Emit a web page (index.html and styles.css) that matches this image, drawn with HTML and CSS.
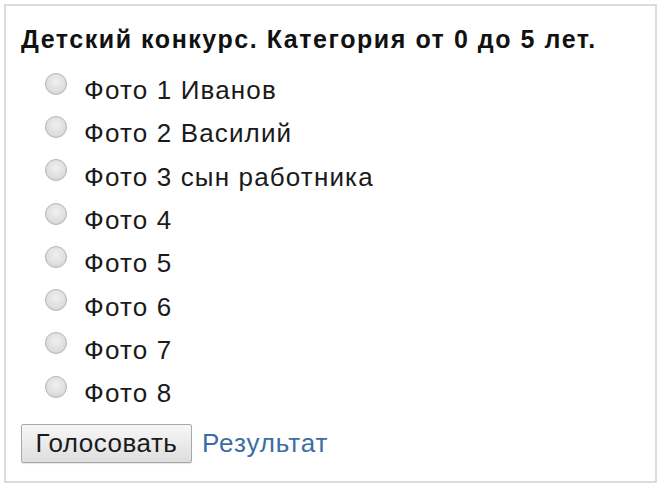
FILE: index.html
```html
<!DOCTYPE html>
<html lang="ru">
<head>
<meta charset="utf-8">
<link rel="stylesheet" href="styles.css">
</head>
<body>
<div class="poll">
  <h2 class="title">Детский конкурс. Категория от 0 до 5 лет.</h2>
  <ul class="options">
    <li class="option"><span class="radio"></span><span class="label">Фото 1 Иванов</span></li>
    <li class="option"><span class="radio"></span><span class="label">Фото 2 Василий</span></li>
    <li class="option"><span class="radio"></span><span class="label">Фото 3 сын работника</span></li>
    <li class="option"><span class="radio"></span><span class="label">Фото 4</span></li>
    <li class="option"><span class="radio"></span><span class="label">Фото 5</span></li>
    <li class="option"><span class="radio"></span><span class="label">Фото 6</span></li>
    <li class="option"><span class="radio"></span><span class="label">Фото 7</span></li>
    <li class="option"><span class="radio"></span><span class="label">Фото 8</span></li>
  </ul>
  <div class="actions">
    <button class="vote">Голосовать</button>
    <a class="result" href="#">Результат</a>
  </div>
</div>
</body>
</html>
```

FILE: styles.css
```css
html, body {
  margin: 0;
  padding: 0;
  background: #fff;
}
body {
  padding: 4px;
  font-family: "Liberation Sans", Arial, sans-serif;
  color: #1a1a1a;
}
.poll {
  width: 653px;
  height: 479px;
  border: 2px solid #dcdcdc;
  box-sizing: border-box;
  padding: 18px 0 0 15px;
}
.title {
  margin: 0;
  font-size: 25px;
  font-weight: bold;
  line-height: 30px;
  letter-spacing: 1.55px;
  color: #111;
}
.options {
  list-style: none;
  margin: 15px 0 0 0;
  padding: 0 0 0 24px;
}
.option {
  display: flex;
  align-items: center;
  height: 43.3px;
}
.radio {
  width: 22px;
  height: 22px;
  border-radius: 50%;
  box-sizing: border-box;
  border: 1px solid #b4b4b4;
  background: radial-gradient(circle at 50% 40%, #f0f0f0 0%, #e0e0e0 55%, #cccccc 100%);
  margin-right: 17px;
  flex: none;
  position: relative;
  top: -7px;
}
.label {
  font-size: 26px;
  letter-spacing: 1.15px;
  color: #1a1a1a;
}
.actions {
  display: flex;
  align-items: center;
  margin-top: 9px;
}
.vote {
  font-family: "Liberation Sans", Arial, sans-serif;
  font-size: 26px;
  letter-spacing: 0.5px;
  color: #1a1a1a;
  height: 39px;
  width: 171px;
  padding: 0;
  border: 1px solid #a9a9a9;
  border-radius: 2px;
  background: linear-gradient(#f7f7f7, #dedede);
  box-shadow: 0 1px 1px rgba(0,0,0,0.1);
}
.result {
  margin-left: 10px;
  font-size: 26px;
  letter-spacing: 0.9px;
  color: #3b6ea8;
  text-decoration: none;
}
```
